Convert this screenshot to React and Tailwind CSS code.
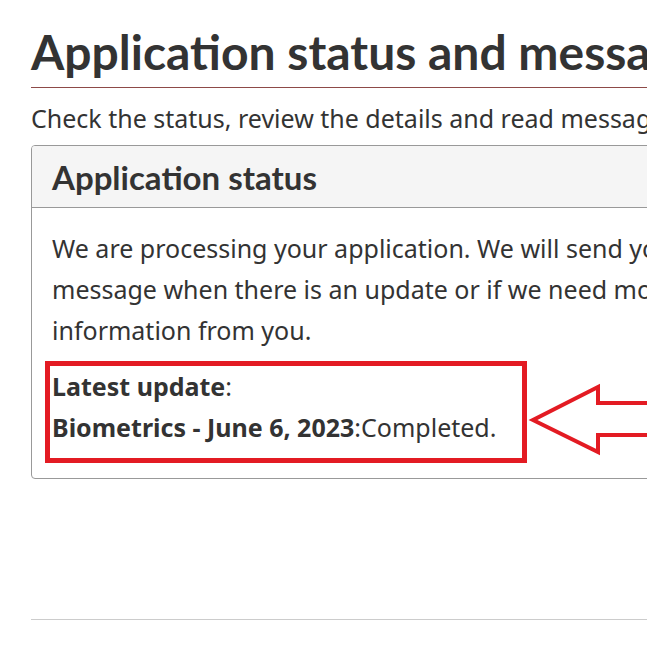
export default function App() {
  return (
    <div className="w-[647px] h-[647px] overflow-hidden bg-white text-[#333]">
      <div className="w-[1000px] pl-[31px] pt-[22px] relative">
        {/* page title */}
        <h1 className="font-['Lato',sans-serif] font-bold text-[48px] leading-[60px] border-b border-[#8d4a48] pb-[5px]">
          Application status and messages
        </h1>
        <p className="font-['Noto_Sans',sans-serif] text-[25px] leading-[32px] mt-[14px]">
          Check the status, review the details and read messages about your application.
        </p>

        {/* status panel */}
        <section className="mt-[11px] border border-[#999] rounded-[4px] overflow-hidden">
          <div className="bg-[#f5f5f5] border-b border-[#999] px-[20px] h-[62px] flex items-center">
            <h2 className="font-['Lato',sans-serif] font-bold text-[33px] leading-none pt-[1px]">Application status</h2>
          </div>
          <div className="px-[20px] pt-[20px] pb-[30px] font-['Noto_Sans',sans-serif] text-[25px] leading-[41px]">
            <p className="w-[660px]">
              We are processing your application. We will send you a message when there is an update or if we need more
              information from you.
            </p>
            <div className="relative mt-[15px]">
              <p>
                <strong>Latest update</strong>:
              </p>
              <p>
                <strong>Biometrics - June 6, 2023</strong>:Completed.
              </p>
              {/* annotation box */}
              <div className="absolute left-[-7px] top-[-5px] w-[482px] h-[102px] border-[5px] border-[#e31b23]" />
            </div>
          </div>
        </section>

        {/* annotation arrow */}
        <svg className="absolute left-[500px] top-[370px]" width="200" height="100" viewBox="0 0 200 100">
          <path
            d="M200 33 L98 33 L98 17 L33 50 L98 82 L98 65 L200 65"
            fill="none"
            stroke="#e31b23"
            strokeWidth="4"
            strokeLinejoin="miter"
          />
        </svg>

        <div className="mt-[140px] border-t border-[#ccc]" />
      </div>
    </div>
  )
}
